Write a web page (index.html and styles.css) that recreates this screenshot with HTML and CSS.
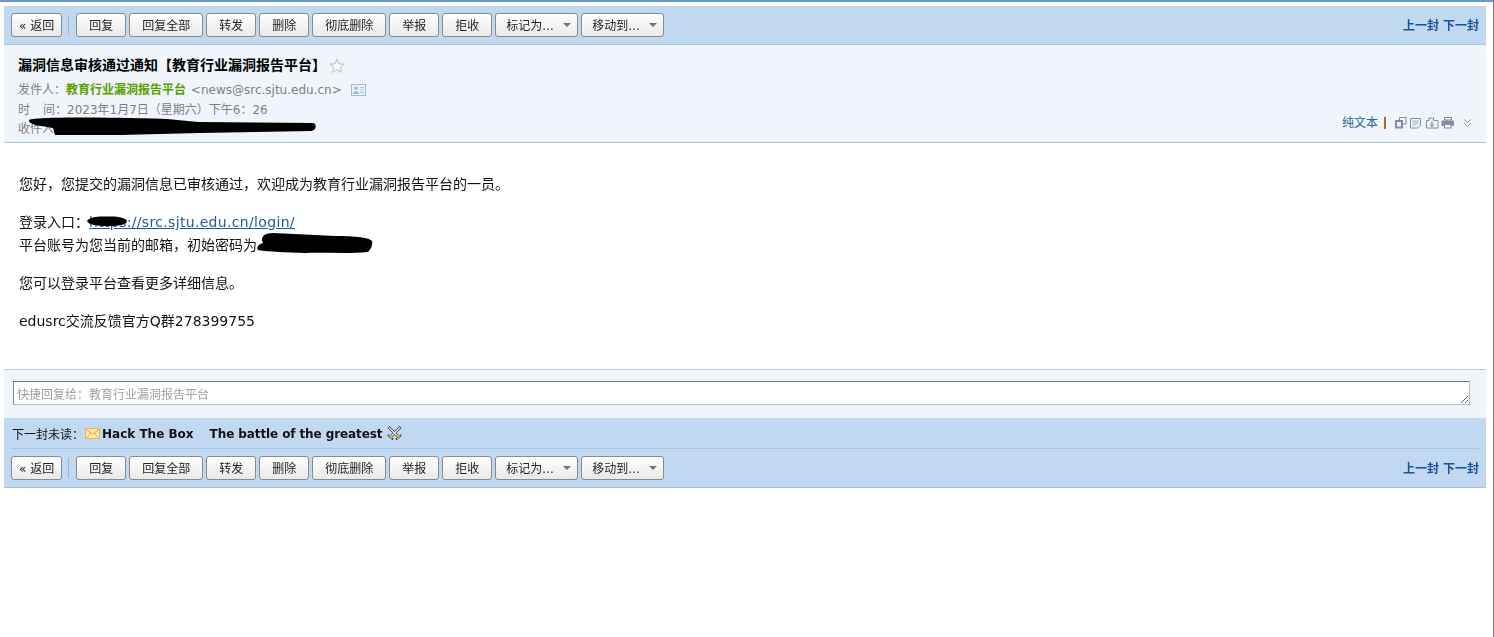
FILE: index.html
```html
<!DOCTYPE html>
<html lang="zh-CN">
<head>
<meta charset="utf-8">
<title>漏洞信息审核通过通知</title>
<link rel="stylesheet" href="styles.css">
</head>
<body>
<div class="page">
  <div class="toolbar top-toolbar">
    <div class="btn-row">
      <button class="btn back">« 返回</button>
      <span class="sep"></span>
      <button class="btn">回复</button>
      <button class="btn">回复全部</button>
      <button class="btn">转发</button>
      <button class="btn">删除</button>
      <button class="btn">彻底删除</button>
      <button class="btn">举报</button>
      <button class="btn">拒收</button>
      <button class="btn menu">标记为...<i class="caret"></i></button>
      <button class="btn menu">移动到...<i class="caret"></i></button>
    </div>
    <div class="pager"><a>上一封</a> <a>下一封</a></div>
  </div>

  <div class="mail-head">
    <h1 class="subject">漏洞信息审核通过通知【教育行业漏洞报告平台】<svg class="star" width="16" height="15" viewBox="0 0 16 15"><path d="M8 1l2 4.800 5 .4-3.800 3.300 1.200 4.900L8 11.800l-4.400 2.600 1.200-4.900L1 6.200l5-.4z" fill="#f8f9fb" stroke="#b9bdc2"/></svg></h1>
    <div class="meta meta-from">发件人：<b class="sender">教育行业漏洞报告平台</b> <span class="addr">&lt;news@src.sjtu.edu.cn&gt;</span>
      <svg class="card" width="15" height="12" viewBox="0 0 15 12"><rect x=".5" y=".5" width="14" height="11" fill="#e9f1fa" stroke="#9dbcdc"/><circle cx="5" cy="4.300" r="1.800" fill="#9dbcdc"/><path d="M2 10c0-2.300 1.500-3 3-3s3 .7 3 3z" fill="#9dbcdc"/><path d="M9 3.500h4M9 6h4M9 8.500h4" stroke="#a9c4df"/></svg>
    </div>
    <div class="meta meta-time"><span class="time-label">时<span class="gap"></span>间：</span>2023年1月7日（星期六）下午6：26</div>
    <div class="meta meta-to">收件人</div>
    <svg class="blot blot-to" width="290" height="20" viewBox="0 0 290 20"><path d="M1 3C10 0 60 0 139 2L170 5 285 6C289 7 289 13 283 14L172 16 92 18 27 18 25 11C15 9 0 8 1 3Z" fill="#000"/></svg>
    <div class="tools">
      <a class="plain">纯文本</a><span class="bar"></span>
      <svg class="tool-icons" width="78" height="12" viewBox="0 0 78 12" fill="none" stroke="#7d8fa5">
        <path d="M4.500 3V.5h6.500v6.500h-3"/><rect x="1" y="4" width="6" height="6.500" stroke-width="2"/>
        <path d="M15.500 1.500h10v7l-3 2.500h-7z"/><path d="M17.500 4h6M17.500 6h6M17.500 8h4" stroke="#a5b2c2"/>
        <path d="M31.500 11V3.500h2.500V1h4.500v2.500h4.500V11z"/><path d="M37 4.500v4.500M35 7.500l2 2 2-2" stroke="#5f7288"/>
        <path d="M49.500 .5h7v2.500h-7z"/><path d="M47 4h11.500v4.500H47z" fill="#7d8fa5"/><rect x="49.500" y="7.500" width="6.500" height="3.500" fill="#fff"/>
        <path d="M69 2.500l3.500 3 3.500-3M69 6l3.500 3.500L76 6" stroke="#9a9a9a"/>
      </svg>
    </div>
  </div>

  <div class="mail-body">
    <p>您好，您提交的漏洞信息已审核通过，欢迎成为教育行业漏洞报告平台的一员。</p>
    <p>登录入口：<a class="link">https://src.sjtu.edu.cn/login/</a><br>平台账号为您当前的邮箱，初始密码为</p>
    <p>您可以登录平台查看更多详细信息。</p>
    <p>edusrc交流反馈官方Q群278399755</p>
    <svg class="blot blot-link" width="44" height="11" viewBox="0 0 44 11"><path d="M1 5C3 1 12 0 22 .5C32 0 40 2 41 5C41 9 32 10 22 10C12 10 2 9 1 5Z" fill="#000"/></svg>
    <svg class="blot blot-pwd" width="120" height="24" viewBox="0 0 120 24"><path d="M7 8C7 4 10 1 18 1C40 2 60 3 80 4C95 4 114 5 117 9C118 13 116 17 113 20C90 22 70 20 50 21C30 20 15 20 3 18C1 15 4 12 8 11Z" fill="#000"/></svg>
  </div>

  <div class="quick-reply">
    <textarea class="reply-box" placeholder="快捷回复给：教育行业漏洞报告平台"></textarea>
  </div>

  <div class="toolbar bottom-toolbar">
    <div class="next-unread">下一封未读：<svg class="env" width="15" height="11" viewBox="0 0 15 11"><rect x=".5" y=".5" width="14" height="10" fill="#fce7a6" stroke="#e9b659"/><path d="M1 1.500l6.500 4.500L14 1.500M1.500 10l4.500-5M13.500 10L9 5" fill="none" stroke="#e5ab49"/></svg><b class="next-title">Hack The Box</b><b class="next-title next-second">The battle of the greatest</b><svg class="swords" width="15" height="14" viewBox="0 0 15 14" fill="none"><path d="M1.500 1l9 9M13.500 1l-9 9" stroke="#3f4447" stroke-width="2.800"/><path d="M2 1.500l8.500 8.500M13 1.500L4.500 10" stroke="#e4e7e8" stroke-width="1.200"/><path d="M1 9l5 4.500M14 9l-5 4.500" stroke="#3d3a2c" stroke-width="1.800"/><path d="M2 9.500l3 3M13 9.500l-3 3" stroke="#e0b04a" stroke-width="1.200"/></svg></div>
    <div class="bottom-row">
      <div class="btn-row">
        <button class="btn back">« 返回</button>
        <span class="sep"></span>
        <button class="btn">回复</button>
        <button class="btn">回复全部</button>
        <button class="btn">转发</button>
        <button class="btn">删除</button>
        <button class="btn">彻底删除</button>
        <button class="btn">举报</button>
        <button class="btn">拒收</button>
        <button class="btn menu">标记为...<i class="caret"></i></button>
        <button class="btn menu">移动到...<i class="caret"></i></button>
      </div>
      <div class="pager"><a>上一封</a> <a>下一封</a></div>
    </div>
  </div>
</div>
</body>
</html>
```
FILE: styles.css
```css
* { box-sizing: border-box; }
html, body { margin: 0; height: 100%; }
body {
  background: #fff;
  border-top: 2px solid #6b98c9;
  border-right: 1px solid #6f7276;
  font-family: "DejaVu Sans", "Noto Sans CJK SC", sans-serif;
  font-size: 12px;
  color: #000;
  overflow: hidden;
  text-spacing-trim: space-all;
}
.page { padding: 4px 7px 0 4px; }
.toolbar { background: #c1d8f1; }
.top-toolbar {
  display: flex;
  justify-content: space-between;
  align-items: center;
  height: 39px;
  padding: 0 7px;
  border-bottom: 1px solid #a6c2e0;
}
.btn-row { display: flex; align-items: center; gap: 3px; }
.btn {
  height: 24px;
  padding: 0 12px 2px;
  border: 1px solid #8a8a8a;
  border-radius: 3px;
  background: linear-gradient(#ffffff, #e9e9e9);
  font: 12px "DejaVu Sans", "Noto Sans CJK SC", sans-serif;
  color: #222;
  display: flex;
  align-items: center;
  white-space: nowrap;
}
.back { padding: 0 7px 2px; }
.menu { width: 83px; padding: 0 6px 2px 10px; justify-content: space-between; }
.caret {
  width: 0; height: 0;
  margin-top: 2px;
  border: 4px solid transparent;
  border-top: 4px solid #757575;
  border-bottom: 0;
}
.sep { width: 1px; height: 20px; background: #a3b2c4; margin: 0 4px 0 3px; }
.pager { color: #1d5394; font-weight: bold; display: flex; gap: 4px; padding-bottom: 2px; }
.mail-head {
  position: relative;
  height: 98px;
  padding: 11px 14px 0;
  background: #f0f5fc;
  border-bottom: 1px solid #a6c6e4;
}
.subject {
  display: flex;
  align-items: center;
  margin: 0;
  font-size: 14px;
  line-height: 18px;
  font-weight: bold;
  color: #000;
}
.star { margin-left: 3px; }
.meta { color: #808080; line-height: 19px; height: 19px; }
.meta-from { margin-top: 7px; }
.meta-time { margin-top: 1px; }
.sender { color: #5a9e00; }
.addr { margin-left: 1px; }
.card { vertical-align: -2px; margin-left: 5px; }
.gap { display: inline-block; width: 13px; }
.blot { position: absolute; }
.blot-to { left: 24px; top: 72px; }
.tools {
  position: absolute;
  right: 13px;
  top: 68px;
  display: flex;
  align-items: center;
  gap: 6px;
}
.plain { color: #2b6298; padding-bottom: 2px; }
.bar { width: 2px; height: 12px; background: #b36a16; }
.tool-icons { margin-left: 3px; }
.mail-body {
  position: relative;
  height: 227px;
  padding: 30px 15px 0;
  font-size: 14px;
  line-height: 23px;
  color: #111;
  border-bottom: 1px solid #b9cbe0;
}
.mail-body p { margin: 0 0 15px; }
.link { color: #1e5a9c; text-decoration: underline; letter-spacing: .33px; }
.blot-link { left: 82px; top: 73px; }
.blot-pwd { left: 251px; top: 89px; }
.quick-reply { height: 48px; padding: 11px 16px 0 9px; background: #f0f5fc; }
.reply-box {
  display: block;
  width: 100%;
  height: 24px;
  padding: 3px;
  border: 1px solid;
  border-color: #767676 #bdbdbd #bdbdbd #8a8a8a;
  font: 12px "DejaVu Sans", "Noto Sans CJK SC", sans-serif;
  outline: none;
}
.reply-box::placeholder { color: #a0a0a0; opacity: 1; }
.bottom-toolbar { padding: 0 7px; border-bottom: 1px solid #a6c2e0; height: 70px; }
.next-unread {
  height: 31px;
  display: flex;
  align-items: center;
  padding-left: 1px;
  border-bottom: 1px solid #a9c5e0;
  color: #111;
}
.env { margin: 0 2px 0 1px; }
.next-title { font-size: 12px; margin-top: 2px; }
.next-second { margin-left: 16px; letter-spacing: -.1px; }
.swords { margin-left: 5px; }
.bottom-row { display: flex; justify-content: space-between; align-items: center; height: 38px; }
```
